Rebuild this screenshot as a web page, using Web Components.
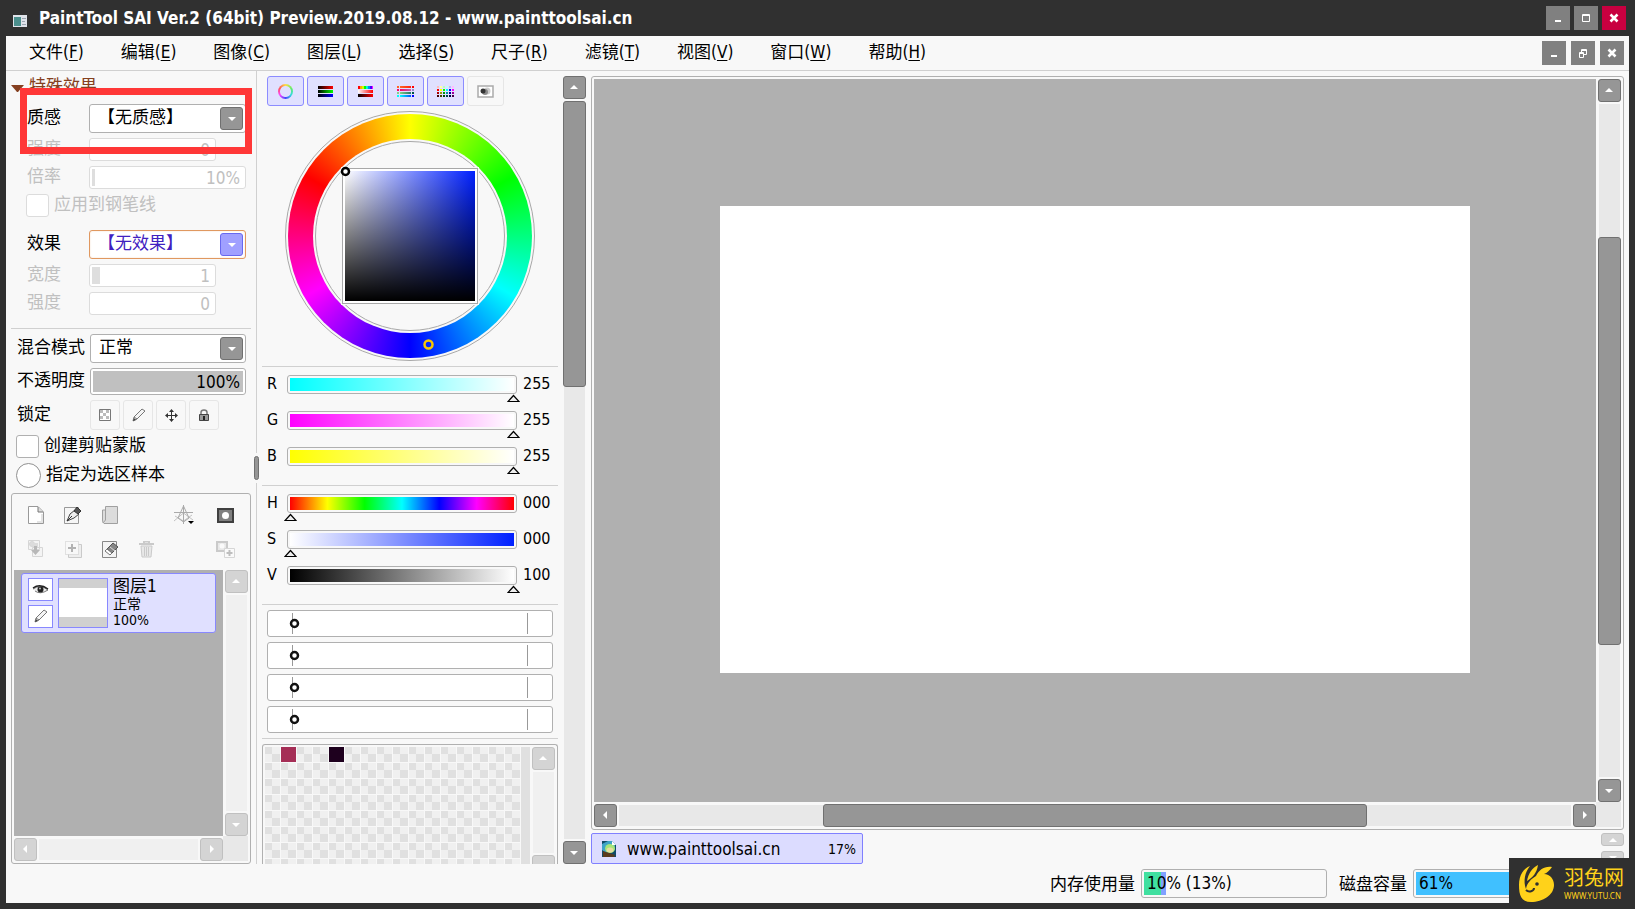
<!DOCTYPE html>
<html lang="zh-CN">
<head>
<meta charset="utf-8">
<title>PaintTool SAI Ver.2</title>
<style>
  html, body { margin: 0; height: 100%; background: #303030; }
  body {
    font-family: "DejaVu Sans Condensed", "Noto Sans", "Noto Sans CJK SC", sans-serif;
    font-size: 17px; line-height: 20px; color: #000;
    --line: #d0d0d0; --edge: #b0b0b0; --face: #f8f8f8;
  }
</style>
</head>
<body>
<sai-window></sai-window>

<script>
function define(name, css, html, ready) {
  const tpl = document.createElement('template');
  tpl.innerHTML = `<style>:host,*,*::before,*::after{box-sizing:border-box}
    button,input,select{font:inherit;color:inherit;margin:0;padding:0;border:0;background:none;border-radius:0;outline:0}
    svg{display:block}${css}</style>${html}`;
  customElements.define(name, class extends HTMLElement {
    constructor() {
      super();
      this.attachShadow({ mode: 'open' }).append(tpl.content.cloneNode(true));
    }
    connectedCallback() { if (ready) ready.call(this, this.shadowRoot); }
  });
}

/* ---------- scroll bar ---------- */
define('scroll-bar', `
  :host{display:flex;flex-direction:column;gap:2px;width:23px;--b:#969696;--e:#707070;--t:#e8e8e8}
  :host([flat]){flex-direction:row;width:auto;height:23px}
  :host([off]){--b:#d4d4d4;--e:#c0c0c0;--t:#f0f0f0}
  button{flex:none;width:23px;height:23px;background:var(--b);border:1px solid var(--e);border-radius:3px;display:grid;place-items:center}
  .track{flex:1;display:flex;flex-direction:column;border:0 solid transparent;border-width:0 1px;background:var(--t);background-clip:padding-box;min-height:0}
  :host([flat]) .track{flex-direction:row;border-width:1px 0}
  .thumb{background:var(--b);border:1px solid var(--e);border-radius:3px;margin:0 -1px}
  :host([flat]) .thumb{margin:-1px 0}
`, `
  <button class="a" aria-label="back"><svg width="9" height="9"><path fill="#fff"/></svg></button>
  <div class="track"></div>
  <button class="b" aria-label="forward"><svg width="9" height="9"><path fill="#fff"/></svg></button>
`, function (r) {
  const flat = this.hasAttribute('flat');
  const [p, q] = r.querySelectorAll('path');
  p.setAttribute('d', flat ? 'M6 0V8L2 4Z' : 'M0 6H8L4 2Z');
  q.setAttribute('d', flat ? 'M3 0V8L7 4Z' : 'M0 3H8L4 7Z');
  const t = this.getAttribute('thumb');
  if (t) {
    const [x, y, z] = t.split(' ');
    r.querySelector('.track').innerHTML =
      `<i style="flex:${x} 0 0"></i><div class="thumb" style="flex:${y} 0 0"></div><i style="flex:${z} 0 0"></i>`;
  }
});

/* ---------- form pieces ---------- */
define('drop-down', `
  :host{display:grid;grid-template-columns:var(--label,62px) 1fr;align-items:center}
  label{line-height:26px;margin-bottom:3px}
  .box{position:relative;height:29px;border:1px solid var(--edge);border-radius:3px;background:#fff}
  select{appearance:none;width:100%;height:24px;padding:0 26px 0 8px;display:block}
  .arrow{position:absolute;right:2px;top:2px;width:23px;height:23px;background:#969696;border:1px solid #707070;border-radius:3px;display:grid;place-items:center;pointer-events:none}
  :host([hot]) .box{border-color:#e09860;box-shadow:inset 0 0 2px #f4dccb}
  :host([hot]) select{color:#4020c0}
  :host([hot]) .arrow{background:#a0a0ff;border-color:#6868f0}
`, `
  <label for="s"></label>
  <div class="box"><select id="s"><option></option></select><span class="arrow"><svg width="8" height="4"><path d="M0 0H8L4 4Z" fill="#fff"/></svg></span></div>
`, function (r) {
  r.querySelector('label').textContent = this.getAttribute('label');
  r.querySelector('option').textContent = this.getAttribute('value');
});

define('value-field', `
  :host{display:grid;grid-template-columns:var(--label,62px) 1fr;align-items:center}
  label{line-height:20px;margin-bottom:3px}
  input{width:100%;height:23px;border:1px solid var(--edge);border-radius:3px;padding:0 5px 0 2px;text-align:right;background:linear-gradient(#c0c0c0,#c0c0c0) 2px 2px/var(--fill,0) calc(100% - 4px) no-repeat #fff}
  :host([short]) input{width:127px}
  :host([tall]) input{height:27px}
  :host([off]){color:#c0c0c0}
  :host([off]) input{border-color:#dcdcdc;background-image:linear-gradient(#dedede,#dedede)}
`, `<label for="i"></label><input id="i" type="text">`, function (r) {
  r.querySelector('label').textContent = this.getAttribute('label');
  const i = r.querySelector('input');
  i.value = this.getAttribute('value');
  i.disabled = this.hasAttribute('off');
  i.style.setProperty('--fill', this.getAttribute('fill') || '0');
});

define('tick-box', `
  :host{display:flex;align-items:center;gap:5px}
  input{appearance:none;width:23px;height:23px;flex:none;border:1px solid var(--edge);border-radius:3px;background:#fff}
  input[type=radio]{width:25px;height:25px;border-radius:50%;border-color:#909090}
  label{line-height:20px;margin-bottom:3px}
  :host([off]){color:#c0c0c0}
  :host([off]) input{border-color:#dcdcdc}
`, `<input id="c"><label for="c"><slot></slot></label>`, function (r) {
  const i = r.querySelector('input');
  i.type = this.hasAttribute('round') ? 'radio' : 'checkbox';
  i.disabled = this.hasAttribute('off');
});

define('tool-button', `
  :host{display:block;width:30px;height:30px}
  button{width:100%;height:100%;border:1px solid #e6e6e6;border-radius:3px;display:grid;place-items:center}
  :host([on]) button{background:#e0e0ff;border-color:#8c8cff}
  :host([bare]) button{border:0}
`, `<button><slot></slot></button>`, function (r) {
  r.querySelector('button').setAttribute('aria-label', this.getAttribute('name'));
});

/* ---------- title and menus ---------- */
define('window-key', `
  :host{display:block;width:24px;height:24px}
  button{width:24px;height:24px;background:#808080;display:grid;place-items:center}
  :host([red]) button{background:#c80040}
`, `<button><svg width="24" height="24" fill="none" stroke="#fff"></svg></button>`, function (r) {
  const k = this.getAttribute('kind');
  r.querySelector('button').setAttribute('aria-label', k);
  r.querySelector('svg').innerHTML = {
    min: '<path d="M9 15H15" stroke-width="2"/>',
    max: '<path d="M8.500 8.500H15.500V15.500H8.500ZM8 9.500H16"/>',
    restore: '<path d="M10.500 11V8.500H15.500V13.500H13M10 9.500H15M8.500 11.500H12.500V16.500H8.500ZM8 12.500H13"/>',
    close: '<path d="M8.500 8.500L15.500 15.500M15.500 8.500L8.500 15.500" stroke-width="2.600"/>'
  }[k];
});

define('title-bar', `
  :host{display:flex;align-items:center;height:36px;padding:0 3px 0 7px;color:#fff}
  .name{margin-left:12px;font-weight:700;flex:1;white-space:nowrap}
  .keys{display:flex;gap:4px}
  svg{margin-top:6px}
`, `
  <svg width="14" height="12"><rect width="14" height="12" fill="#dfe3ea"/><rect x="1" y="2" width="7" height="9" fill="#4b8f8d"/><path d="M9 3.500H13M9 6.500H12M9 9.500H13" stroke="#9aa4b0"/></svg>
  <span class="name">PaintTool SAI Ver.2 (64bit) Preview.2019.08.12 - www.painttoolsai.cn</span>
  <div class="keys"><window-key kind="min"></window-key><window-key kind="max"></window-key><window-key kind="close" red></window-key></div>
`);

define('menu-bar', `
  :host{display:flex;align-items:center;justify-content:space-between;height:35px;padding:0 5px;border-bottom:1px solid var(--line);background:var(--face)}
  nav{display:flex}
  nav button{padding:0 19px 2px 18px;line-height:26px;white-space:nowrap}
  u{text-underline-offset:2px}
  .keys{display:flex;gap:5px}
`, `
  <nav></nav>
  <div class="keys"><window-key kind="min"></window-key><window-key kind="restore"></window-key><window-key kind="close"></window-key></div>
`, function (r) {
  r.querySelector('nav').innerHTML = '文件F 编辑E 图像C 图层L 选择S 尺子R 滤镜T 视图V 窗口W 帮助H'.split(' ')
    .map(t => `<button>${t.slice(0, 2)}(<u>${t[2]}</u>)</button>`).join('');
});

/* ---------- left column ---------- */
define('brush-effects', `
  :host{display:flex;flex-direction:column;position:relative}
  h2{margin:0 0 8px;height:20px;display:flex;align-items:center;gap:5px;font-size:17px;font-weight:400;color:#854020}
  h2 svg{margin-top:4px}
  .set{display:flex;flex-direction:column;gap:5px;padding:0 5px 0 16px}
  .set+.set{margin-top:13px}
  tick-box{margin-left:-1px}
  .mark{position:absolute;left:9px;top:12px;width:232px;height:66px;border:7px solid #ff3737}
`, `
  <h2><svg width="13" height="7"><path d="M0 0H13L7 7H6Z" fill="#854020"/></svg>特殊效果</h2>
  <div class="set">
    <drop-down label="质感" value="【无质感】"></drop-down>
    <value-field label="强度" value="0" short off></value-field>
    <value-field label="倍率" value="10%" fill="3px" off></value-field>
    <tick-box off>应用到钢笔线</tick-box>
  </div>
  <div class="set">
    <drop-down label="效果" value="【无效果】" hot></drop-down>
    <value-field label="宽度" value="1" fill="8px" short off></value-field>
    <value-field label="强度" value="0" short off></value-field>
  </div>
  <div class="mark"></div>
`);

const PENCIL = '<path d="M2 13L3 9L11 1L14 3L6 11ZM3 9L6 11" fill="#f4f4f4" stroke="#777" stroke-width="1"/><path d="M2 13L3 10L5 12Z" fill="#444"/>';

define('layer-options', `
  :host{display:flex;flex-direction:column;gap:5px;padding:5px 5px 5px 6px;border-top:1px solid var(--line);margin-top:13px;--label:73px}
  .lock{display:flex;align-items:center;gap:3px}
  .lock span{width:70px;margin-bottom:3px}
  tick-box{margin-left:-1px}
`, `
  <drop-down label="混合模式" value="正常"></drop-down>
  <value-field label="不透明度" value="100%" fill="150px" tall></value-field>
  <div class="lock"><span>锁定</span>
    <tool-button name="opacity"><svg width="12" height="12"><path d="M.5 .5H11.500V11.500H.5Z" fill="#fff" stroke="#777"/><path d="M1 1h3v3H1zM7 1h3v3H7zM4 4h3v3H4zM1 7h3v3H1zM7 7h3v3H7z" fill="#bbb"/></svg></tool-button>
    <tool-button name="paint"><svg width="15" height="15">${PENCIL}</svg></tool-button>
    <tool-button name="move"><svg width="13" height="13"><path d="M6.500 1V12M1 6.500H12" stroke="#333"/><path d="M4 3L6.500 0L9 3ZM4 10L6.500 13L9 10ZM3 4L0 6.500L3 9ZM10 4L13 6.500L10 9Z" fill="#333"/></svg></tool-button>
    <tool-button name="all"><svg width="12" height="13"><path d="M3 6V3.500Q3 1 6 1T9 3.500V6" fill="none" stroke="#777" stroke-width="1.500"/><path d="M1.500 5.500H10.500V11.500H1.500Z" fill="#999" stroke="#444"/><path d="M5 7H7V11H5Z" fill="#222"/></svg></tool-button>
  </div>
  <tick-box>创建剪贴蒙版</tick-box>
  <tick-box round>指定为选区样本</tick-box>
`);

define('layer-card', `
  :host{display:grid;grid-template-columns:25px 50px 1fr;column-gap:5px;height:60px;padding:4px 6px;background:#e0e0ff;border:1px solid #8888ff;border-radius:3px}
  .pair{display:flex;flex-direction:column;gap:4px}
  .pair button{width:25px;height:23px;border:1px solid #8888ff;background:#fff;display:grid;place-items:center}
  .thumb{height:50px;border:1px solid #8888ff;background:linear-gradient(#d0d0d0 9px,#fff 9px 38px,#d0d0d0 38px)}
  .txt{display:flex;flex-direction:column;font-size:14px;line-height:16px}
  b{font-weight:400;font-size:17px;line-height:20px;margin-top:-2px}
  .txt>*{white-space:nowrap}
`, `
  <div class="pair">
    <button aria-label="visible"><svg width="17" height="13"><path d="M1 6Q8 1 16 7Q8 12 3 8" fill="#eee" stroke="#777"/><path d="M1 5Q8 0 16 6" fill="none" stroke="#222" stroke-width="1.500"/><circle cx="8.500" cy="6.500" r="3" fill="#222"/><circle cx="8" cy="5.500" r="1" fill="#bbb"/></svg></button>
    <button aria-label="paint"><svg width="15" height="15">${PENCIL}</svg></button>
  </div>
  <div class="thumb"></div>
  <div class="txt"><b>图层1</b><span>正常</span><span>100%</span></div>
`);

define('layer-panel', `
  :host{display:flex;flex-direction:column;border:1px solid var(--edge);border-radius:3px;padding:2px}
  .tools{display:grid;grid-template-columns:38px 36px 38px 34px 42px 1fr;grid-auto-rows:34px;height:74px;padding:2px 2px 4px 3px}
  .tools tool-button{width:auto;height:34px}
  .dim{opacity:.35}
  .body{flex:1;display:grid;grid-template:1fr 23px/1fr 23px;gap:2px;min-height:0}
  .list{background:#b0b0b0;padding:3px 7px}
  .corner{background:#e8e8e8;margin:-2px 0 0 -2px}
`, `
  <div class="tools">
    <tool-button bare name="new layer"><svg width="16" height="18"><path d="M.5 .5H10L15.500 6V17.500H.5Z" fill="#fff" stroke="#999"/><path d="M10 1V6H15" fill="#ddd" stroke="#777"/><path d="M9 16H14V8" fill="none" stroke="#e4e4e4" stroke-width="2"/></svg></tool-button>
    <tool-button bare name="new pen layer"><svg width="18" height="18"><path d="M.5 1.500H14.500V17.500H.5Z" fill="#f6f6f6" stroke="#999"/><path d="M3 15L6 8L11 4L15 8L10 12Z" fill="#eee" stroke="#444"/><path d="M3 15L8 10" stroke="#333"/><path d="M10 5L13 1L17 5L14 8Z" fill="#555" stroke="#333"/></svg></tool-button>
    <tool-button bare name="new folder"><svg width="16" height="18"><path d="M3.500 .5H15.500V17.500H2Q.5 17 .5 14V4H3.500Z" fill="#dcdcdc" stroke="#a0a0a0"/><path d="M3.500 4V14L1 17" fill="none" stroke="#a0a0a0"/></svg></tool-button>
    <span></span>
    <tool-button bare name="ruler"><svg width="20" height="20" fill="none" stroke="#aaa"><path d="M0 7.500H19M9.500 0V19M9.500 1L4 13L9.500 17L15 13Z"/><path d="M0 16L9.500 8L19 15M1 11L9.500 16L18 10" stroke-width=".7"/><path d="M14 16H20L17 19Z" fill="#000" stroke="none"/></svg></tool-button>
    <tool-button bare name="mask"><svg width="17" height="15"><path d="M1 1H16V14H1Z" fill="#808080" stroke="#404040" stroke-width="2"/><circle cx="8.500" cy="7.500" r="3.500" fill="#fff"/></svg></tool-button>
    <tool-button bare name="merge down" class="dim"><svg width="16" height="18" stroke="#999"><path d="M.5 .5H11.500V9.500H.5ZM4.500 7.500H14.500V16.500H4.500Z" fill="#eee"/><circle cx="4" cy="4" r="2.500" fill="#aaa"/><path d="M5 3H10V7H5Z" fill="#aaa" stroke="none"/><path d="M6 6H9V10H12L7.500 15L3 10H6Z" fill="#444" stroke="none"/></svg></tool-button>
    <tool-button bare name="duplicate" class="dim"><svg width="17" height="17" fill="none" stroke="#777"><path d="M3.500 3.500H16.500V16.500H3.500Z" fill="#ddd"/><path d="M.5 .5H13.500V13.500H.5Z" fill="#f8f8f8" stroke-dasharray="1 1"/><path d="M7 3V11M3 7H11" stroke="#333" stroke-width="2"/></svg></tool-button>
    <tool-button bare name="clear"><svg width="18" height="18"><path d="M1.500 1.500H15.500V17.500H1.500Z" fill="#f4f4f4" stroke="#888"/><path d="M6 9L12 3L17 7L11 13Z" fill="#888" stroke="#555"/><path d="M6 9L11 13L9 15L4 11Z" fill="#fff" stroke="#777"/><path d="M9 7L14 11" stroke="#ddd"/></svg></tool-button>
    <tool-button bare name="delete" class="dim"><svg width="15" height="17" fill="none" stroke="#777"><path d="M5 2V.5H10V2M0 3H15" stroke-width="2"/><path d="M2 5L3 16H12L13 5Z" fill="#ccc"/><path d="M5.500 6V15M7.500 6V15M9.500 6V15"/></svg></tool-button>
    <span></span>
    <tool-button bare name="apply mask" class="dim"><svg width="20" height="17"><path d="M1 1H11V10H1Z" fill="#ccc" stroke="#777" stroke-width="2"/><circle cx="6" cy="5" r="2.500" fill="#fff"/><path d="M8.500 7.500H18.500V16.500H8.500Z" fill="#fff" stroke="#999"/><path d="M13.500 9V15M10.500 12H16.500" stroke="#555" stroke-width="2"/></svg></tool-button>
  </div>
  <div class="body">
    <div class="list"><layer-card></layer-card></div>
    <scroll-bar off></scroll-bar>
    <scroll-bar off flat></scroll-bar>
    <div class="corner"></div>
  </div>
`);

define('split-bar', `
  :host{display:flex;flex-direction:column;align-items:center;gap:3px;width:1px}
  i{flex:1;width:1px;background:var(--line)}
  b{width:5px;height:24px;margin:0 -2px;background:#969696;border:1px solid #707070;border-radius:3px;z-index:1}
`, `<i></i><b></b><i></i>`);

/* ---------- colour column ---------- */
define('colour-wheel', `
  :host{display:grid;place-items:center;height:250px}
  .disc{grid-area:1/1;width:250px;height:250px;border-radius:50%;border:1px solid #a8a8a8}
  .hue{grid-area:1/1;width:244px;height:244px;border-radius:50%;background:conic-gradient(#ff0,#0f0,#0ff,#00f,#f0f,#f00,#ff0)}
  .hole{grid-area:1/1;width:194px;height:194px;border-radius:50%;background:var(--face)}
  .rim{grid-area:1/1;width:190px;height:190px;border-radius:50%;border:1px solid #a8a8a8}
  .sq{grid-area:1/1;width:136px;height:136px;border:1px solid #a8a8a8;outline:1px solid var(--face);padding:2px;background:linear-gradient(transparent,#000) content-box,linear-gradient(90deg,#fff,#0020ff) content-box,#fff}
  svg{grid-area:1/1}
`, `
  <div class="disc"></div><div class="hue"></div><div class="hole"></div><div class="rim"></div><div class="sq"></div>
  <svg width="250" height="250" fill="none" stroke-width="2.500"><circle cx="60.500" cy="60.500" r="3.500" stroke="#000"/><circle cx="143.500" cy="233.500" r="4" stroke="#f8c800"/></svg>
`);

define('colour-slider', `
  :host{display:grid;grid-template-columns:20px 230px 1fr;height:36px;align-items:start;font-size:16px}
  label,output{line-height:18px}
  output{padding-left:6px}
  .track{height:19px;border:1px solid var(--edge);border-radius:3px;padding:2px;background-color:#fff;background-clip:content-box;background-origin:content-box}
  input{appearance:none;display:block;width:236px;height:8px;margin-left:-3px}
  input::-webkit-slider-thumb{appearance:none;width:13px;height:8px;background:url("data:image/svg+xml,%3Csvg xmlns='http://www.w3.org/2000/svg' width='13' height='8'%3E%3Cpath d='M1 7.500H12L6.500 1.500Z' fill='%23eee' stroke='%23000' stroke-width='1.200'/%3E%3C/svg%3E")}
`, `<label for="r"></label><div><div class="track"></div><input id="r" type="range"></div><output for="r"></output>`, function (r) {
  r.querySelector('label').textContent = this.getAttribute('label');
  r.querySelector('output').textContent = this.getAttribute('value');
  r.querySelector('.track').style.backgroundImage = `linear-gradient(90deg,${this.getAttribute('ramp')})`;
  const i = r.querySelector('input');
  i.max = this.getAttribute('max');
  i.value = +this.getAttribute('value');
});

define('mix-strip', `
  :host{display:block;height:27px;border:1px solid var(--edge);border-radius:3px;background:#fff}
`, `<svg width="284" height="25" fill="none"><path d="M24.500 2V23M259.500 2V23" stroke="#999"/><circle cx="26.500" cy="12.500" r="3.500" fill="#fff" stroke="#111" stroke-width="2.500"/></svg>`);

define('swatch-grid', `
  :host{display:flex;align-items:stretch;overflow:hidden;border:1px solid var(--edge);border-bottom:0;border-radius:3px 3px 0 0;padding:2px 2px 0}
  .pad{flex:none;width:9px;background:#e0e0e0;margin-right:2px}
  svg{flex:none;width:256px;height:117px}
  scroll-bar{height:131px;flex:none}
`, `
  <svg><defs><pattern id="p" width="16" height="16" patternUnits="userSpaceOnUse"><rect width="15" height="15" fill="#f0f0f0"/><path d="M0 0H7V7H0ZM7 7H15V15H7Z" fill="#e0e0e0"/></pattern></defs>
  <rect width="256" height="117" fill="url(#p)"/><rect x="16" width="15" height="15" fill="#a52e56"/><rect x="64" width="15" height="15" fill="#1e001e"/></svg>
  <div class="pad"></div><scroll-bar off></scroll-bar>
`);

const cells = (rows, w, h, dx, dy) => rows.map((row, y) =>
  row.split(' ').map((c, x) => `<rect x="${x * dx}" y="${y * dy}" width="${w}" height="${h}" fill="${c}"/>`).join('')).join('');

const RAMPS = [['#f62', '#f21', 'red'], ['#f06', '#b6a', '#98c'], ['#8c8', '#276', '#054'], ['#0ff', '#05f', '#00f']];
const ramps = RAMPS.map(([a, b, c], i) => `<linearGradient id="m${i}"><stop stop-color="${a}"/><stop offset="1" stop-color="${b}"/></linearGradient>
  <rect y="${i * 3}" width="2" height="2" fill="${a}"/><rect x="3" y="${i * 3}" width="11" height="2" fill="url(#m${i})"/><rect x="15" y="${i * 3}" width="2" height="2" fill="${c}"/>`).join('');

define('colour-panel', `
  :host{display:flex;flex-direction:column;min-height:0}
  .tabs{display:flex;gap:3px;padding:0 5px;margin-bottom:5px}
  .tabs tool-button{width:37px}
  .ring{width:15px;height:15px;border-radius:50%;background:radial-gradient(#e0e0ff 5px,transparent 6px),conic-gradient(#fd4,#6e6,#3dd,#44f,#f4f,#f55,#fd4)}
  .group{border-top:1px solid var(--line);padding:8px 5px 2px}
  .strips{display:flex;flex-direction:column;gap:5px;padding:5px}
  colour-wheel{margin-bottom:5px}
  .last{flex:1;display:flex;min-height:0;padding:5px 0 0}
`, `
  <div class="tabs">
    <tool-button on name="wheel"><div class="ring"></div></tool-button>
    <tool-button on name="rgb"><svg width="15" height="11"><defs><linearGradient id="r"><stop/><stop offset="1" stop-color="red"/></linearGradient><linearGradient id="g"><stop/><stop offset="1" stop-color="lime"/></linearGradient><linearGradient id="b"><stop/><stop offset="1" stop-color="blue"/></linearGradient></defs><rect width="15" height="3" fill="url(#r)"/><rect y="4" width="15" height="3" fill="url(#g)"/><rect y="8" width="15" height="3" fill="url(#b)"/></svg></tool-button>
    <tool-button on name="hsv"><svg width="15" height="11"><defs><linearGradient id="w"><stop stop-color="#fff"/><stop offset="1" stop-color="red"/></linearGradient><linearGradient id="k"><stop/><stop offset="1" stop-color="red"/></linearGradient></defs>${cells(['red #fa0 #cf0 #0f0 #0fc #08f #40f #f0f'], 2, 3, 2, 4)}<rect y="4" width="15" height="3" fill="url(#w)"/><rect y="8" width="15" height="3" fill="url(#k)"/></svg></tool-button>
    <tool-button on name="mixer"><svg width="17" height="11">${ramps}</svg></tool-button>
    <tool-button on name="swatches"><svg width="17" height="11">${cells(['#fbb #ffa #bfb #bff #bbf #fbf', 'red #ff0 #0f0 #0ff #00f #f0f', '#a00 #990 #090 #099 #009 #909', '#400 #440 #040 #044 #004 #404'], 2, 2, 3, 3)}</svg></tool-button>
    <tool-button name="scratchpad"><svg width="17" height="13"><path d="M1 1H16V12H1Z" fill="#fff" stroke="#aaa" stroke-width="1.500"/><circle cx="10" cy="6" r="3.500" fill="#ccc"/><circle cx="8" cy="7" r="3" fill="#888"/><circle cx="6" cy="6" r="2.500" fill="#333"/></svg></tool-button>
  </div>
  <colour-wheel></colour-wheel>
  <div class="group">
    <colour-slider label="R" value="255" max="255" ramp="#0ff,#fff"></colour-slider>
    <colour-slider label="G" value="255" max="255" ramp="#f0f,#fff"></colour-slider>
    <colour-slider label="B" value="255" max="255" ramp="#ff0,#fff"></colour-slider>
  </div>
  <div class="group">
    <colour-slider label="H" value="000" max="359" ramp="#f00,#ff0,#0f0,#0ff,#00f,#f0f,#f00"></colour-slider>
    <colour-slider label="S" value="000" max="100" ramp="#fff,#0020ff"></colour-slider>
    <colour-slider label="V" value="100" max="100" ramp="#000,#fff"></colour-slider>
  </div>
  <div class="group strips"><mix-strip></mix-strip><mix-strip></mix-strip><mix-strip></mix-strip><mix-strip></mix-strip></div>
  <div class="group last"><swatch-grid></swatch-grid></div>
`);

/* ---------- canvas ---------- */
define('canvas-view', `
  :host{display:grid;grid-template:1fr 23px/1fr 23px;gap:2px;border:1px solid var(--edge);border-radius:3px;padding:2px;min-height:0;min-width:0}
  .desk{background:#b0b0b0;display:grid;place-items:center;min-height:0;padding:0 1px 2px}
  .sheet{width:75%;aspect-ratio:750/467;background:#fff}
  .corner{background:#e8e8e8;margin:-2px 0 0 -2px}
`, `
  <div class="desk"><div class="sheet"></div></div>
  <scroll-bar thumb="133 408 132"></scroll-bar>
  <scroll-bar flat thumb="204 544 204"></scroll-bar>
  <div class="corner"></div>
`);

define('doc-tabs', `
  :host{display:flex;justify-content:space-between;height:31px;overflow:hidden}
  .tab{width:272px;height:31px;border:1px solid #8080ff;border-radius:2px;background:#dcdcff;display:flex;align-items:center;padding:0 6px 0 10px;gap:11px}
  .tab span{flex:1;text-align:left}
  .tab small{font-size:14px}
  .spin{display:flex;flex-direction:column;gap:5px}
  .spin button{width:23px;height:13px;flex:none;background:#d4d4d4;border:1px solid #c0c0c0;border-radius:3px;display:grid;place-items:center}
`, `
  <button class="tab"><svg width="14" height="16"><path d="M0 0H10L14 4V16H0Z" fill="#124a66"/><path d="M0 3L6 0H10L13 4V9L4 12L0 9Z" fill="#3fa3c8"/><ellipse cx="8" cy="7.500" rx="5" ry="4.500" fill="#a6e57a"/><ellipse cx="8" cy="9" rx="3.500" ry="2.500" fill="#e8dca0"/><path d="M1 10L13 14L12 16H1Z" fill="#5a3b1e"/><path d="M10 0V4H14Z" fill="#fff"/></svg>
    <span>www.painttoolsai.cn</span><small>17%</small></button>
  <div class="spin"><button aria-label="up"><svg width="8" height="4"><path d="M0 4H8L4 0Z" fill="#fff"/></svg></button><button aria-label="down"><svg width="8" height="4"><path d="M0 0H8L4 4Z" fill="#fff"/></svg></button></div>
`);

/* ---------- status ---------- */
define('status-meter', `
  :host{display:flex;align-items:center;gap:6px}
  span{white-space:nowrap}
  .box{width:186px;height:29px;border:1px solid var(--edge);border-radius:3px;padding:2px;line-height:23px}
  .fill{height:23px;padding-left:3px;white-space:nowrap;background:var(--bar)}
`, `<span></span><div class="box"><div class="fill"></div></div>`, function (r) {
  r.querySelector('span').textContent = this.getAttribute('label');
  const f = r.querySelector('.fill');
  f.textContent = this.getAttribute('value');
  f.style.setProperty('--bar', this.getAttribute('bar'));
});

define('status-bar', `
  :host{display:flex;justify-content:flex-end;align-items:center;gap:12px;height:39px;padding-right:30px}
`, `
  <status-meter label="内存使用量" value="10% (13%)" bar="linear-gradient(90deg,#40e0a0 17px,#80a0ff 17px 22px,transparent 22px)"></status-meter>
  <status-meter label="磁盘容量" value="61%" bar="linear-gradient(90deg,#40c0ff 61%,transparent 61%)"></status-meter>
`);

define('site-badge', `
  :host{position:fixed;right:0;bottom:0;width:126px;height:51px;background:#303030;color:#ffd21a;display:flex;align-items:center;gap:9px;padding-left:10px}
  .t{display:flex;flex-direction:column;align-items:flex-start}
  b{font-weight:400;font-size:20px;line-height:24px}
  small{font-family:"Noto Sans",sans-serif;font-size:8px;line-height:11px}
`, `
  <svg width="36" height="38"><path d="M11 1C5 3 0 10 0 20C0 30 2 37 12 37C24 37 35 30 35 20C35 14 31 9 25 9C28 8 31 5 33 2C25 1 20 5 17 11C12 14 8 18 7 24C4 16 6 7 11 1Z" fill="#ffd21a"/><path d="M19 0C13 3 9 9 8 16C13 13 18 8 19 0Z" fill="#ffd21a"/><path d="M7 25C10 28 15 26 15 23" fill="none" stroke="#303030" stroke-width="2"/><circle cx="18" cy="19" r="1.800" fill="#303030"/></svg>
  <div class="t"><b>羽兔网</b><small>WWW.YUTU.CN</small></div>
`);

define('sai-window', `
  :host{display:flex;flex-direction:column;height:100vh;min-height:860px;padding:0 6px 6px;overflow:hidden}
  .inner{flex:1;display:flex;flex-direction:column;background:var(--face);min-height:0}
  .work{flex:1;display:grid;grid-template-columns:250px 1px 296px 23px 1fr;min-height:0}
  .left{display:flex;flex-direction:column;padding:5px 5px 0}
  layer-panel{flex:1}
  colour-panel{margin:5px 0 0 5px;width:296px}
  .bar{margin:5px 0 0 10px}
  .right{display:flex;flex-direction:column;gap:3px;padding:5px 5px 0 15px;min-width:0}
  canvas-view{flex:1}
`, `
  <title-bar></title-bar>
  <div class="inner">
    <menu-bar></menu-bar>
    <div class="work">
      <div class="left"><brush-effects></brush-effects><layer-options></layer-options><layer-panel></layer-panel></div>
      <split-bar></split-bar>
      <colour-panel></colour-panel>
      <scroll-bar class="bar" thumb="0 285 453"></scroll-bar>
      <div class="right"><canvas-view></canvas-view><doc-tabs></doc-tabs></div>
    </div>
    <status-bar></status-bar>
  </div>
  <site-badge></site-badge>
`);
</script>
</body>
</html>
